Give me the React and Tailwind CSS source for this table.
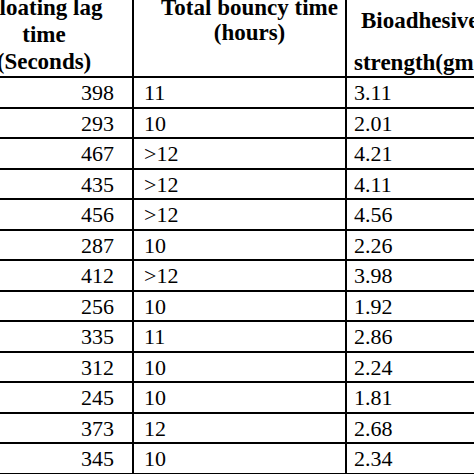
const rows = [
  ['398', '11', '3.11'],
  ['293', '10', '2.01'],
  ['467', '>12', '4.21'],
  ['435', '>12', '4.11'],
  ['456', '>12', '4.56'],
  ['287', '10', '2.26'],
  ['412', '>12', '3.98'],
  ['256', '10', '1.92'],
  ['335', '11', '2.86'],
  ['312', '10', '2.24'],
  ['245', '10', '1.81'],
  ['373', '12', '2.68'],
  ['345', '10', '2.34'],
]

export default function App() {
  return (
    <div className="h-[474px] w-[474px] overflow-hidden bg-white font-['Liberation_Serif',serif] text-black">
      <div className="ml-[-44px] w-[560px]">
        {/* header */}
        <div className="flex h-[78px] border-b-2 border-black text-[23px] font-bold">
          <div className="w-[178px] shrink-0 overflow-hidden border-r-2 border-black">
            <div className="-mt-[6px] text-center leading-[27px]">
              <div>Floating lag</div>
              <div>time</div>
              <div>(Seconds)</div>
            </div>
          </div>
          <div className="w-[213px] shrink-0 overflow-hidden border-r-2 border-black pl-[20px]">
            <div className="-mt-[5px] whitespace-nowrap text-center leading-[25px]">
              <div>Total bouncy time</div>
              <div>(hours)</div>
            </div>
          </div>
          <div className="flex-1 overflow-hidden whitespace-nowrap leading-[25px]">
            <p className="pl-[14px] pt-[8px]">Bioadhesive</p>
            <p className="mt-[17px] pl-[7px]">strength(gms)</p>
          </div>
        </div>

        {/* body */}
        {rows.map((r, i) => (
          <div key={i} className="flex h-[30.5px] border-b-2 border-black text-[22px] leading-[28.5px]">
            <div className="w-[178px] shrink-0 border-r-2 border-black pr-[18px] pt-[1px] text-right">{r[0]}</div>
            <div className="w-[213px] shrink-0 border-r-2 border-black pl-[10px] pt-[1px]">{r[1]}</div>
            <div className="flex-1 pl-[7px] pt-[1px]">{r[2]}</div>
          </div>
        ))}
      </div>
    </div>
  )
}
